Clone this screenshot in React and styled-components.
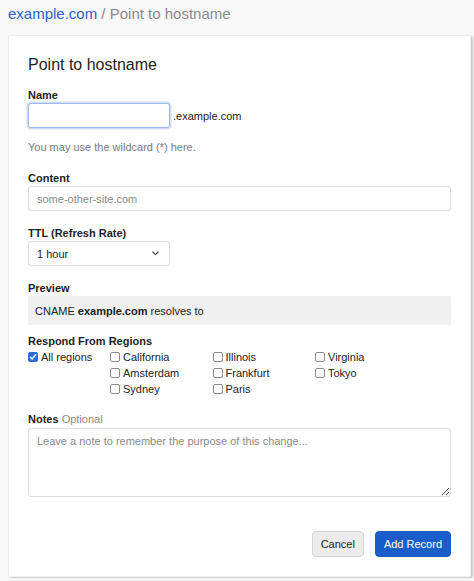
import React from "react";
import styled, { createGlobalStyle } from "styled-components";

const Global = createGlobalStyle`
  html, body { margin: 0; padding: 0; background: #f8f8f8; }
  body { font-family: "Liberation Sans", Arial, sans-serif; color: #222; }
  * { box-sizing: border-box; }
`;

const Page = styled.div`
  width: 474px;
  padding: 0 3px 5px 8px;
`;

const Breadcrumb = styled.div`
  font-size: 15px;
  line-height: 17px;
  padding-top: 5px;
  height: 35px;
  color: #8a8a8a;
`;

const Crumb = styled.a`
  color: #2a62c4;
  text-decoration: none;
`;

const Card = styled.div`
  background: #fff;
  border: 1px solid #ececec;
  border-radius: 2px;
  box-shadow: 2px 1px 2px rgba(0, 0, 0, 0.18);
  padding: 19px 19px 19px 19px;
  display: flex;
  flex-direction: column;
`;

const Title = styled.h1`
  font-size: 16px;
  font-weight: normal;
  line-height: 20px;
  margin: 0 0 13px;
  color: #1e1e1e;
`;

const Field = styled.div`
  display: flex;
  flex-direction: column;
  gap: ${(p) => p.$gap ?? 1}px;
  margin-bottom: ${(p) => p.$mb ?? 15}px;
`;

const Label = styled.label`
  font-size: 11px;
  font-weight: bold;
  line-height: 14px;
  color: #1e1e1e;
`;

const Muted = styled.span`
  font-weight: normal;
  color: #8a8a8a;
`;

const Row = styled.div`
  display: flex;
  align-items: center;
  gap: 3px;
  font-size: 11px;
`;

const TextInput = styled.input`
  height: 25px;
  width: ${(p) => p.$w || "100%"};
  border: 1px solid ${(p) => (p.$focus ? "#9db8ea" : "#dcdcdc")};
  box-shadow: ${(p) => (p.$focus ? "0 0 0 1.5px rgba(120,160,230,0.35)" : "none")};
  border-radius: 3px;
  padding: 0 8px;
  font-family: inherit;
  font-size: 11px;
  color: #222;
  outline: none;
  &::placeholder { color: #8a8a8a; }
`;

const Help = styled.p`
  margin: 12px 0 17px;
  font-size: 11px;
  line-height: 14px;
  color: #7a7a7a;
`;

const SelectBox = styled.div`
  position: relative;
  width: 142px;
  height: 25px;
  border: 1px solid #dcdcdc;
  border-radius: 3px;
  display: flex;
  align-items: center;
  justify-content: space-between;
  padding: 0 10px 0 8px;
  font-size: 11px;
  color: #222;
`;

const Preview = styled.div`
  height: 29px;
  background: #f0f0f0;
  display: flex;
  align-items: center;
  padding: 0 7px;
  font-size: 11px;
  color: #222;
  border-radius: 2px;
`;

const Regions = styled.div`
  display: flex;
  align-items: flex-start;
`;

const RegionGrid = styled.div`
  display: grid;
  grid-template-rows: repeat(3, 16px);
  grid-auto-flow: column;
  grid-auto-columns: 102.5px;
`;

const Check = styled.label`
  display: flex;
  align-items: center;
  gap: 3px;
  height: 16px;
  font-size: 11px;
  color: #222;
  width: ${(p) => p.$w || "auto"};
`;

const Box = styled.span`
  width: 10px;
  height: 10px;
  border-radius: 2px;
  border: 1px solid ${(p) => (p.$on ? "#2b6fd6" : "#8d8d8d")};
  background: ${(p) => (p.$on ? "#2b6fd6" : "#fff")};
  display: inline-flex;
  align-items: center;
  justify-content: center;
  flex: none;
`;

const TextArea = styled.textarea`
  height: 69px;
  width: 100%;
  border: 1px solid #dcdcdc;
  border-radius: 3px;
  padding: 5px 8px;
  font-family: inherit;
  font-size: 11px;
  line-height: 14px;
  resize: vertical;
  outline: none;
  &::placeholder { color: #8a8a8a; }
`;

const Actions = styled.div`
  display: flex;
  justify-content: flex-end;
  gap: 11px;
  margin-top: 34px;
`;

const Button = styled.button`
  height: 26px;
  padding: 0 8px;
  border-radius: 4px;
  font-family: inherit;
  font-size: 11px;
  border: 1px solid ${(p) => (p.$primary ? "#1b5bc4" : "#d4d4d4")};
  background: ${(p) => (p.$primary ? "#1b5ec9" : "#ececec")};
  color: ${(p) => (p.$primary ? "#fff" : "#222")};
`;

const CheckBox = ({ on, children, w }) => (
  <Check $w={w}>
    <Box $on={on}>
      {on && (
        <svg width="8" height="8" viewBox="0 0 8 8">
          <path d="M1.4 4.2 L3.2 6 L6.6 1.8" fill="none" stroke="#fff" strokeWidth="1.4" strokeLinecap="round" strokeLinejoin="round" />
        </svg>
      )}
    </Box>
    {children}
  </Check>
);

const regions = ["California", "Amsterdam", "Sydney", "Illinois", "Frankfurt", "Paris", "Virginia", "Tokyo"];

export default function App() {
  return (
    <>
      <Global />
      <Page>
        <Breadcrumb>
          <Crumb href="#">example.com</Crumb> / Point to hostname
        </Breadcrumb>
        <Card>
          <Title>Point to hostname</Title>
          <Field $mb={0}>
            <Label>Name</Label>
            <Row>
              <TextInput $w="142px" $focus />
              <span>.example.com</span>
            </Row>
          </Field>
          <Help>You may use the wildcard (*) here.</Help>
          <Field>
            <Label>Content</Label>
            <TextInput placeholder="some-other-site.com" />
          </Field>
          <Field>
            <Label>TTL (Refresh Rate)</Label>
            <SelectBox>
              <span>1 hour</span>
              <svg width="7" height="5" viewBox="0 0 7 5">
                <path d="M0.8 1 L3.5 3.7 L6.2 1" fill="none" stroke="#444" strokeWidth="1.1" strokeLinecap="round" strokeLinejoin="round" />
              </svg>
            </SelectBox>
          </Field>
          <Field $mb={9}>
            <Label>Preview</Label>
            <Preview>
              CNAME&nbsp;<b>example.com</b>&nbsp;resolves to
            </Preview>
          </Field>
          <Field>
            <Label>Respond From Regions</Label>
            <Regions>
              <CheckBox on w="82px">All regions</CheckBox>
              <RegionGrid>
                {regions.map((r) => (
                  <CheckBox key={r}>{r}</CheckBox>
                ))}
              </RegionGrid>
            </Regions>
          </Field>
          <Field $gap={2} $mb={0}>
            <Label>
              Notes <Muted>Optional</Muted>
            </Label>
            <TextArea placeholder="Leave a note to remember the purpose of this change..." />
          </Field>
          <Actions>
            <Button>Cancel</Button>
            <Button $primary>Add Record</Button>
          </Actions>
        </Card>
      </Page>
    </>
  );
}
